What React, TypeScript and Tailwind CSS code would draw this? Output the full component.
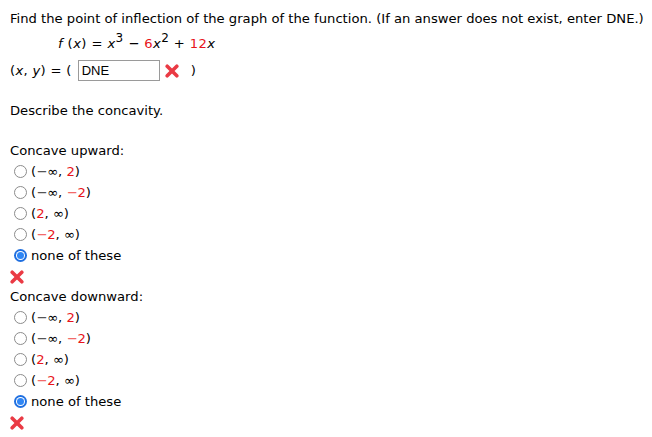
const font = { fontFamily: '"DejaVu Sans", Verdana, sans-serif' };

function RedX({ className = "" }: { className?: string }) {
  return (
    <svg width="14" height="14" viewBox="0 0 14 14" className={className}>
      <path d="M2.2 2.2 L11.8 11.8 M11.8 2.2 L2.2 11.8" stroke="#ea3a44" strokeWidth="3.6" strokeLinecap="round" />
    </svg>
  );
}

function Radio({ checked }: { checked?: boolean }) {
  if (checked) {
    return (
      <span className="flex h-[13px] w-[13px] items-center justify-center rounded-full bg-[#1f6fe0]">
        <span className="flex h-[9px] w-[9px] items-center justify-center rounded-full bg-white">
          <span className="h-[7px] w-[7px] rounded-full bg-[#2f86f5]" />
        </span>
      </span>
    );
  }
  return <span className="h-[13px] w-[13px] rounded-full border border-[#8c8c8c] bg-white" />;
}

type Opt = { a: React.ReactNode; b: React.ReactNode };

const minus = <span className="text-[#555]">−</span>;
const red = "text-[#e8141b]";
const lightRed = "text-[#f26a6a]";

const options: Opt[] = [
  { a: <>{minus}∞</>, b: <span className={red}>2</span> },
  { a: <>{minus}∞</>, b: <><span className={lightRed}>−</span><span className={red}>2</span></> },
  { a: <span className={red}>2</span>, b: <>∞</> },
  { a: <><span className={lightRed}>−</span><span className={red}>2</span></>, b: <>∞</> },
];

function Group({ label }: { label: string }) {
  return (
    <div>
      <div className="h-[20px] leading-[20px]">{label}</div>
      {options.map((o, i) => (
        <div key={i} className="flex h-[21px] items-center gap-[4px] pl-[4px]">
          <Radio />
          <span>
            ({o.a}, {o.b})
          </span>
        </div>
      ))}
      <div className="flex h-[21px] items-center gap-[4px] pl-[4px]">
        <Radio checked />
        <span>none of these</span>
      </div>
      <div className="flex h-[21px] items-center">
        <RedX />
      </div>
    </div>
  );
}

export default function App() {
  return (
    <div className="min-h-[437px] w-[652px] bg-white px-[10px] pt-[11px] text-[13.15px] text-black" style={font}>
      <div className="h-[16px] leading-[16px] whitespace-nowrap">
        Find the point of inflection of the graph of the function. (If an answer does not exist, enter DNE.)
      </div>

      {/* function */}
      <div className="mt-[9px] h-[16px] pl-[48px] leading-[16px] tracking-[0.4px] whitespace-nowrap">
        <i>f</i> (<i>x</i>) = <i>x</i>
        <sup className="text-[12px]">3</sup> − <span className={red}>6</span>
        <i>x</i>
        <sup className="text-[12px]">2</sup> + <span className={red}>12</span>
        <i>x</i>
      </div>

      <div className="mt-[8px] flex h-[21px] items-center whitespace-nowrap">
        <span className="tracking-[0.3px]">
          (<i>x</i>, <i>y</i>) = (
        </span>
        <span
          className="ml-[6px] flex h-[21px] w-[82px] items-center border border-[#9a9a9a] px-[3px] text-[13px]"
          style={{ fontFamily: '"Liberation Sans", Arial, sans-serif' }}
        >
          DNE
        </span>
        <RedX className="ml-[5px]" />
        <span className="ml-[12px]">)</span>
      </div>

      <div className="mt-[22px] h-[16px] leading-[16px]">Describe the concavity.</div>

      <div className="mt-[22px]">
        <Group label="Concave upward:" />
      </div>
      <div>
        <Group label="Concave downward:" />
      </div>
    </div>
  );
}
